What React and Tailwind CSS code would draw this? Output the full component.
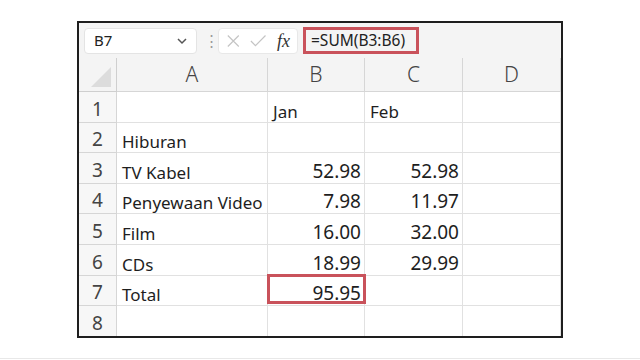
import React from "react";

const cols = ["A", "B", "C", "D"];

const rows = [
  ["", "Jan", "Feb", ""],
  ["Hiburan", "", "", ""],
  ["TV Kabel", "52.98", "52.98", ""],
  ["Penyewaan Video", "7.98", "11.97", ""],
  ["Film", "16.00", "32.00", ""],
  ["CDs", "18.99", "29.99", ""],
  ["Total", "95.95", "", ""],
  ["", "", "", ""],
];

const isNum = (v) => /^[0-9.]+$/.test(v);

function FormulaBar() {
  return (
    <div className="h-[35px] bg-[#f4f4f4] flex items-center">
      <div className="ml-[5px] w-[113px] h-[26px] bg-white rounded-[4px] border border-[#e4e4e4] flex items-center justify-between pl-[9px] pr-[8px]">
        <span className="text-[15px] text-[#222]">B7</span>
        <svg width="12" height="8" viewBox="0 0 12 8" fill="none" stroke="#555" strokeWidth="1.5">
          <path d="M2 2l4 4 4-4" />
        </svg>
      </div>
      <span className="ml-[7px] w-[6px] text-[#999] text-[15px] leading-none">⋮</span>
      <div className="ml-[8px] w-[80px] h-[26px] bg-white rounded-[4px] border border-[#e8e8e8] flex items-center px-[7px] gap-[9px]">
        <svg width="16" height="16" viewBox="0 0 16 16" fill="none" stroke="#c4c4c4" strokeWidth="1.3">
          <path d="M2 2l12 12M14 2L2 14" />
        </svg>
        <svg width="18" height="14" viewBox="0 0 18 14" fill="none" stroke="#c4c4c4" strokeWidth="1.3">
          <path d="M1 7l5 5L17 1" />
        </svg>
        <span className="ml-[2px] text-[18px] italic text-[#333] leading-none" style={{ fontFamily: '"Liberation Serif", serif' }}>
          fx
        </span>
      </div>
      <div className="ml-[5px] w-[116px] h-[27px] border-[3px] border-[#c9525b] flex items-center pl-[5px]">
        <span className="text-[15.5px] text-[#222]">=SUM(B3:B6)</span>
      </div>
    </div>
  );
}

function Grid() {
  return (
    <div className="grid grid-cols-[38px_151px_97px_98px_1fr]">
      <div className="h-[34px] bg-[#f4f4f4] border-r border-b border-[#cfcfcf] relative">
        <div className="absolute right-[5px] bottom-[4px] w-0 h-0 border-l-[20px] border-l-transparent border-b-[20px] border-b-[#dcdcdc]" />
      </div>
      {cols.map((c) => (
        <div
          key={c}
          className="h-[34px] bg-[#f4f4f4] border-r border-b border-[#d6d6d6] flex items-center justify-center text-[21px] font-light text-[#444]"
        >
          {c}
        </div>
      ))}
      {rows.map((r, i) => (
        <React.Fragment key={i}>
          <div className="h-[30.6px] bg-[#f7f7f7] border-r border-b border-[#d6d6d6] flex items-end justify-center pb-[3px] text-[19px] text-[#444] leading-none">
            <span>{i + 1}</span>
          </div>
          {r.map((v, j) => (
            <div
              key={j}
              className={
                "h-[30.6px] border-r border-b border-[#e1e1e1] flex items-end pb-[2px] text-[#1e1e1e] leading-none relative " +
                (isNum(v) ? "justify-end pr-[3px] text-[19px]" : "justify-start pl-[5px] text-[17px]")
              }
            >
              {v}
              {i === 6 && j === 1 && (
                <div className="absolute -left-[1px] -top-[2px] w-[99px] h-[30px] border-[3px] border-[#c9525b]" />
              )}
            </div>
          ))}
        </React.Fragment>
      ))}
    </div>
  );
}

export default function App() {
  return (
    <div className="w-[640px] h-[360px] bg-white overflow-hidden" style={{ fontFamily: '"Noto Sans", "Open Sans", sans-serif' }}>
      <div className="ml-[77px] mt-[21px] w-[486px] h-[317px] border-2 border-[#1e1e1e] overflow-hidden bg-white">
        <FormulaBar />
        <Grid />
      </div>
      <div className="mt-[20px] h-px bg-[#e8e8e8]" />
    </div>
  );
}
